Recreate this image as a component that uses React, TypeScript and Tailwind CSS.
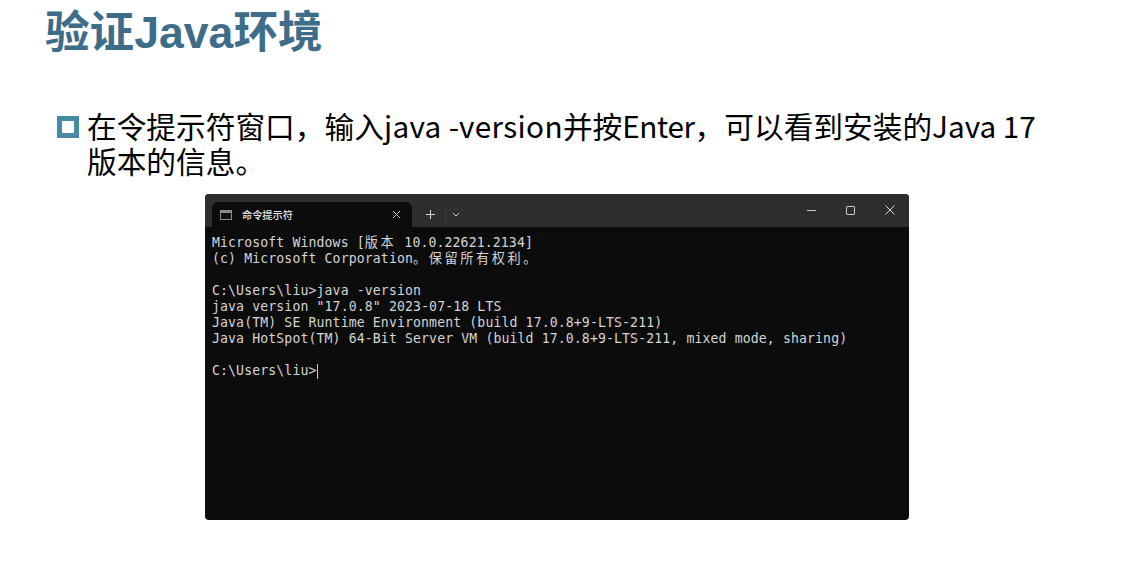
import React from "react";

const cjk = '"Noto Sans CJK SC", sans-serif';
const lines: string[] = [
  "Microsoft Windows [版本 10.0.22621.2134]",
  "(c) Microsoft Corporation。保留所有权利。",
  "",
  "C:\\Users\\liu>java -version",
  'java version "17.0.8" 2023-07-18 LTS',
  "Java(TM) SE Runtime Environment (build 17.0.8+9-LTS-211)",
  "Java HotSpot(TM) 64-Bit Server VM (build 17.0.8+9-LTS-211, mixed mode, sharing)",
  "",
];

function TermLine({ text }: { text: string }) {
  const parts = text.split(/([\u3000-\u9fff]+)/);
  return (
    <div className="h-[16px]">
      {parts.map((p, i) =>
        /[\u3000-\u9fff]/.test(p) ? (
          <span key={i} className="tracking-[2.6px]">{p}</span>
        ) : (
          <span key={i}>{p}</span>
        )
      )}
    </div>
  );
}

export default function App() {
  return (
    <div className="w-[1135px] h-[562px] overflow-hidden bg-white flex flex-col">
      <h1 className="ml-[45px] mt-[5px] h-[60px] text-[44.6px] leading-[56px] font-bold text-[#3e6d89] font-['Liberation_Sans','Noto_Sans_CJK_SC',sans-serif]">
        验证Java环境
      </h1>
      <div className="ml-[57px] mt-[43px] flex items-start">
        <div className="mt-[8px] w-[22px] h-[22px] border-[5px] border-[#468aa5] bg-white shrink-0" />
        <p className="ml-[8px] w-[955px] text-[29.7px] leading-[35px] text-black font-['Noto_Sans_CJK_SC',sans-serif]">
          在令提示符窗口，输入<span className="tracking-[0.35px]">java -version</span>并按<span className="tracking-[-0.4px]">Enter</span>，可以看到安装的Java 17版本的信息。
        </p>
      </div>
      <div className="ml-[205px] mt-[16px] w-[704px] h-[326px] rounded-[4px] overflow-hidden bg-[#0c0c0c] flex flex-col">
        <div className="h-[33px] bg-[#2e2e2e] flex items-end pl-[7px] shrink-0">
          <div className="w-[200px] h-[25px] bg-[#0c0c0c] rounded-t-[6px] flex items-center pl-[8px] pr-[11px]">
            <svg width="12" height="10" viewBox="0 0 12 10" className="shrink-0">
              <rect x="0.5" y="0.5" width="11" height="9" fill="#111" stroke="#8a8a8a" />
              <rect x="1" y="1" width="10" height="2" fill="#8a8a8a" />
            </svg>
            <span className="ml-[10px] text-[10.2px] font-medium text-[#e6e6e6]" style={{ fontFamily: cjk }}>命令提示符</span>
            <svg width="9" height="9" viewBox="0 0 9 9" className="ml-auto">
              <path d="M1 1l7 7M8 1L1 8" stroke="#cfcfcf" strokeWidth="1" />
            </svg>
          </div>
          <div className="h-[25px] flex items-center ml-[14px]">
            <svg width="9" height="9" viewBox="0 0 9 9">
              <path d="M4.5 0v9M0 4.5h9" stroke="#d8d8d8" strokeWidth="1" />
            </svg>
            <div className="ml-[10px] w-px h-[18px] bg-[#3a3a3a]" />
            <svg width="8" height="5" viewBox="0 0 8 5" className="ml-[6px]">
              <path d="M1 1l3 3 3-3" fill="none" stroke="#d0d0d0" strokeWidth="1" />
            </svg>
          </div>
          <div className="ml-auto h-[33px] flex items-center pr-[14px] gap-[30px] pb-[1px]">
            <div className="w-[9px] h-px bg-[#c8c8c8]" />
            <div className="w-[9px] h-[9px] border border-[#c8c8c8] rounded-[1px]" />
            <svg width="10" height="10" viewBox="0 0 10 10">
              <path d="M0.5 0.5l9 9M9.5 0.5l-9 9" stroke="#d8d8d8" strokeWidth="1" />
            </svg>
          </div>
        </div>
        <div className="pl-[7px] pt-[8px] text-[13.17px] tracking-[0.12px] leading-[16px] text-[#d4d4d4] whitespace-pre font-['DejaVu_Sans_Mono','Noto_Sans_CJK_SC',monospace]">
          {lines.map((l, i) => (
            <TermLine key={i} text={l} />
          ))}
          <div className="h-[16px] flex items-center">
            <span>C:\Users\liu&gt;</span>
            <span className="w-px h-[15px] bg-[#cccccc]" />
          </div>
        </div>
      </div>
    </div>
  );
}
